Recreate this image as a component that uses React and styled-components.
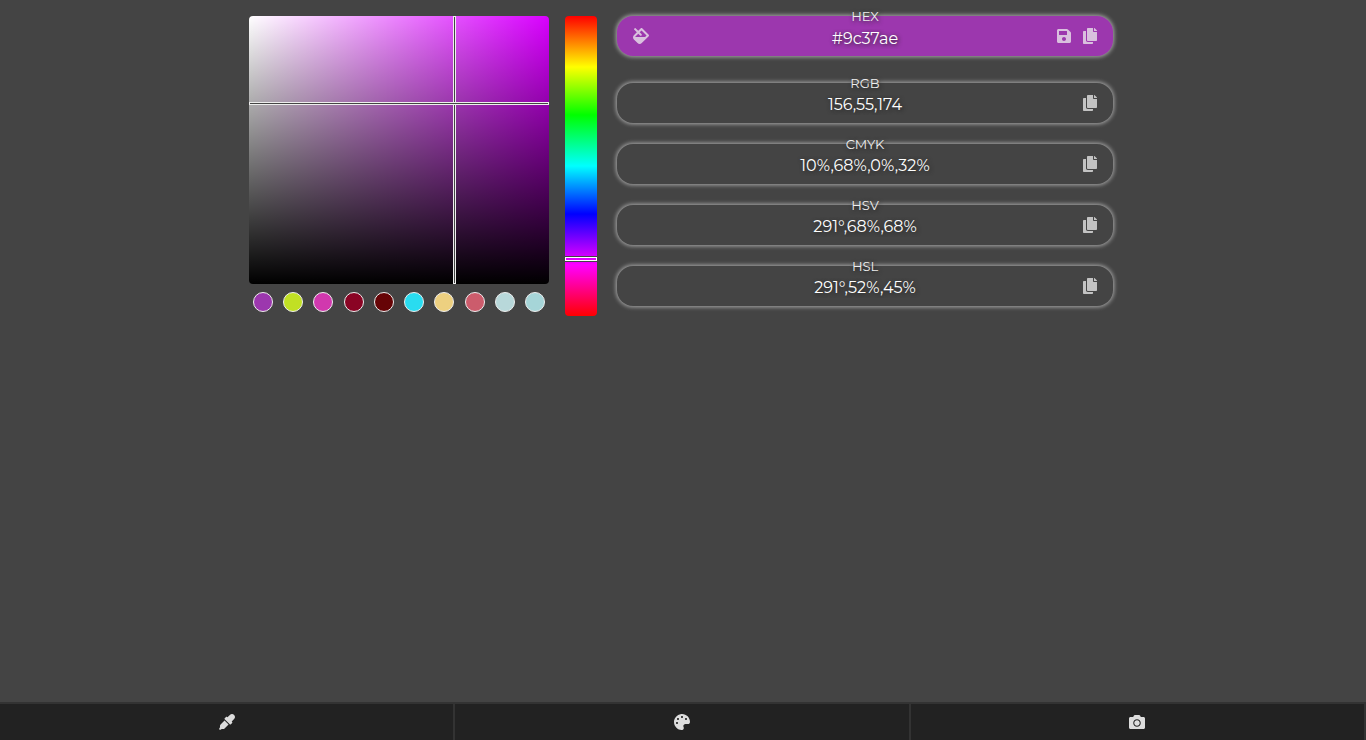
import React, { useState } from "react";
import styled, { createGlobalStyle } from "styled-components";
import {
  FaCamera,
  FaCopy,
  FaEyeDropper,
  FaFill,
  FaPalette,
  FaSave,
} from "react-icons/fa";

const GlobalStyle = createGlobalStyle`
  * {
    box-sizing: border-box;
  }
  body {
    margin: 0;
    background: #444;
    color: #fff;
    font-family: Montserrat, Inter, "Open Sans", sans-serif;
    font-size: 16px;
  }
  button, input {
    font: inherit;
    color: inherit;
  }
`;

const Page = styled.div`
  display: flex;
  flex-direction: column;
  min-height: 100vh;
`;

const Main = styled.main`
  flex: 1;
  display: flex;
  gap: 16px;
  width: 100%;
  max-width: 868px;
  margin: 0 auto;
  padding-top: 16px;
`;

const Picker = styled.div`
  display: flex;
  flex-direction: column;
  gap: 8px;
  width: 300px;
`;

const Shade = styled.div`
  position: relative;
  height: 268px;
  border-radius: 4px;
  overflow: hidden;
  cursor: crosshair;
  background-image: linear-gradient(to top, #000, transparent),
    linear-gradient(to right, #fff, transparent);
`;

const Line = styled.div`
  position: absolute;
  background: #444;
  border: 1px solid #eee;
  pointer-events: none;
`;

const VerticalLine = styled(Line)`
  top: 0;
  bottom: 0;
  width: 3px;
`;

const HorizontalLine = styled(Line)`
  left: 0;
  right: 0;
  height: 3px;
`;

const Swatches = styled.div`
  display: flex;
  justify-content: space-between;
  padding: 0 4px;
`;

const Swatch = styled.button`
  width: 20px;
  height: 20px;
  padding: 0;
  border: 1px solid #eee;
  border-radius: 50%;
  background: ${(props) => props.$color};
  cursor: pointer;
`;

const HueBar = styled.div`
  width: 32px;
  height: 300px;
  border-radius: 4px;
  background: linear-gradient(
    #f00 0%,
    #ff0 17%,
    #0f0 33%,
    #0ff 50%,
    #00f 66%,
    #f0f 83%,
    #f00 100%
  );
`;

// taller than the bar by one thumb, so that the thumb reaches both ends
const HueSlider = styled.input`
  display: block;
  appearance: none;
  writing-mode: vertical-lr;
  width: 32px;
  height: 306px;
  margin: -2px 0 -4px;
  background: transparent;
  cursor: pointer;

  &::-webkit-slider-thumb {
    appearance: none;
    width: 32px;
    height: 6px;
    border: 1px solid #444;
    border-width: 1px 0;
    box-shadow: inset 0 0 0 1px #fff;
    background: transparent;
  }
`;

const Fields = styled.div`
  flex: 1;
  display: flex;
  flex-direction: column;
  gap: 21px;
  padding: 0 4px;
`;

const Field = styled.div`
  position: relative;
  display: grid;
  grid-template-columns: 64px 1fr 64px;
  align-items: center;
  height: 40px;
  margin-bottom: ${(props) => (props.$color ? "6px" : "0")};
  padding: 0 16px;
  border-radius: 16px;
  background: ${(props) => props.$color || "transparent"};
  box-shadow: 0 0 4px 1px #aaa;
`;

const Label = styled.label`
  position: absolute;
  top: -8px;
  left: 0;
  right: 0;
  color: #eee;
  font-size: 13px;
  line-height: 16px;
  text-align: center;
  text-shadow: 1px 1px 4px #222;
  pointer-events: none;
`;

const Value = styled.input`
  grid-column: 2;
  min-width: 0;
  width: 100%;
  padding: ${(props) => (props.$low ? "6px" : "4px")} 0 0;
  border: 0;
  outline: 0;
  background: transparent;
  line-height: 20px;
  text-align: center;
  text-shadow: 1px 1px 4px #222;
`;

const Actions = styled.div`
  grid-row: 1;
  grid-column: ${(props) => (props.$left ? 1 : 3)};
  display: flex;
  justify-content: ${(props) => (props.$left ? "flex-start" : "flex-end")};
  gap: 12px;
`;

const IconButton = styled.button`
  display: flex;
  padding: 0;
  border: 0;
  background: none;
  color: #eee;
  opacity: 0.75;
  cursor: pointer;

  svg {
    height: 16px;
    width: ${(props) => (props.$wide ? "16px" : "14px")};
  }
`;

const Tabs = styled.nav`
  display: grid;
  grid-template-columns: repeat(3, 1fr);
  border-top: 2px solid #333;
`;

const Tab = styled.button`
  display: flex;
  align-items: center;
  justify-content: center;
  height: 36px;
  padding: 0;
  border: 0;
  border-right: 2px solid #333;
  background: #222;
  color: #ddd;
  cursor: pointer;
`;

const history = [
  "#9c37ae",
  "#c1e024",
  "#d138ae",
  "#8a0424",
  "#660406",
  "#29dcf0",
  "#edd080",
  "#cc5c6c",
  "#b8d8da",
  "#a6d5d8",
];

const formats = [
  { name: "RGB", value: "156,55,174" },
  { name: "CMYK", value: "10%,68%,0%,32%" },
  { name: "HSV", value: "291°,68%,68%" },
  { name: "HSL", value: "291°,52%,45%" },
];

const tabs = [
  { name: "Picker", Icon: FaEyeDropper },
  { name: "Palettes", Icon: FaPalette },
  { name: "Camera", Icon: FaCamera },
];

function ColorField({ name, value, color }) {
  const id = name.toLowerCase();
  return (
    <Field $color={color}>
      <Label htmlFor={id}>{name}</Label>
      {color && (
        <Actions $left>
          <IconButton $wide aria-label="Fill">
            <FaFill />
          </IconButton>
        </Actions>
      )}
      <Value id={id} type="text" value={value} $low={color} readOnly />
      <Actions>
        {color && (
          <IconButton aria-label="Save">
            <FaSave />
          </IconButton>
        )}
        <IconButton aria-label={"Copy " + name}>
          <FaCopy />
        </IconButton>
      </Actions>
    </Field>
  );
}

function App() {
  const [hue, setHue] = useState(291);
  const [color, setColor] = useState(history[0]);
  const [point, setPoint] = useState({ s: 68, v: 68 });

  const handlePick = (e) => {
    const box = e.currentTarget.getBoundingClientRect();
    setPoint({
      s: ((e.clientX - box.left) / box.width) * 100,
      v: 100 - ((e.clientY - box.top) / box.height) * 100,
    });
  };

  return (
    <Page>
      <GlobalStyle />
      <Main>
        <Picker>
          <Shade
            onClick={handlePick}
            style={{ backgroundColor: `hsl(${hue}, 100%, 50%)` }}
          >
            <VerticalLine style={{ left: `${point.s}%` }} />
            <HorizontalLine style={{ top: `${100 - point.v}%` }} />
          </Shade>
          <Swatches>
            {history.map((item) => (
              <Swatch
                key={item}
                $color={item}
                aria-label={item}
                onClick={() => setColor(item)}
              />
            ))}
          </Swatches>
        </Picker>
        <HueBar>
          <HueSlider
            type="range"
            aria-label="Hue"
            min="0"
            max="360"
            value={hue}
            onChange={(e) => setHue(Number(e.target.value))}
          />
        </HueBar>
        <Fields>
          <ColorField name="HEX" value={color} color={color} />
          {formats.map((format) => (
            <ColorField key={format.name} {...format} />
          ))}
        </Fields>
      </Main>
      <Tabs>
        {tabs.map(({ name, Icon }) => (
          <Tab key={name} aria-label={name}>
            <Icon size={16} />
          </Tab>
        ))}
      </Tabs>
    </Page>
  );
}

export default App;
